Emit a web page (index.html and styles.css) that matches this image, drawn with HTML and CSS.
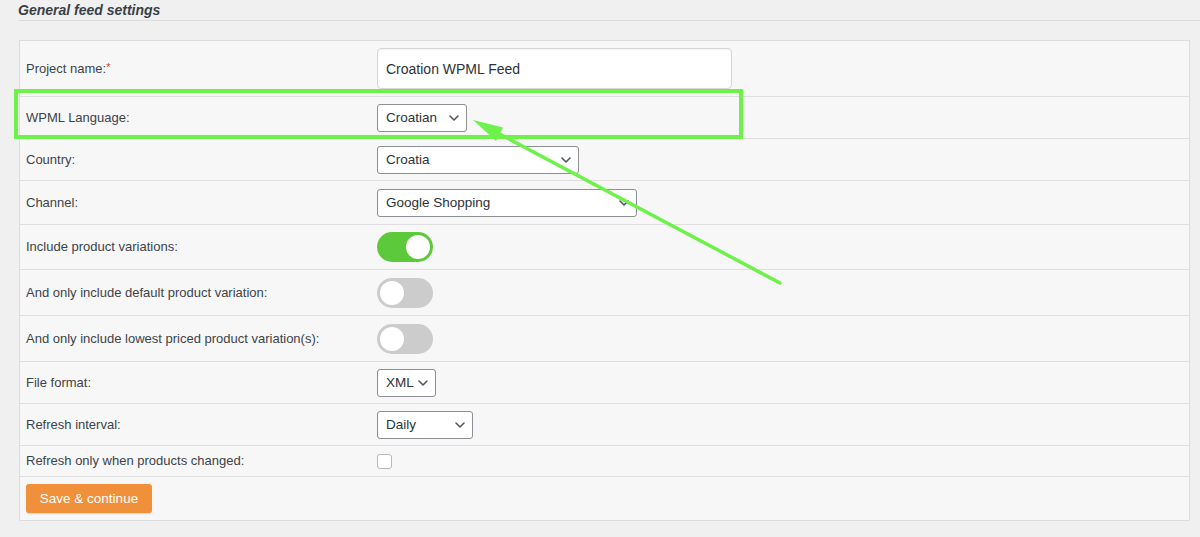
FILE: index.html
```html
<!DOCTYPE html>
<html lang="en">
<head>
<meta charset="utf-8">
<title>General feed settings</title>
<link rel="stylesheet" href="styles.css">
</head>
<body>
<div class="wrap">
  <h2 class="title">General feed settings</h2>
  <div class="panel">
    <div class="row row--text">
      <div class="label">Project name:<span class="req">*</span></div>
      <div class="field"><div class="textinput">Croation WPML Feed</div></div>
    </div>
    <div class="row row--select">
      <div class="label">WPML Language:</div>
      <div class="field"><div class="select select--lang"><span>Croatian</span><svg class="chev" viewBox="0 0 10 6"><path d="M1 1l4 4 4-4"/></svg></div></div>
    </div>
    <div class="row row--select">
      <div class="label">Country:</div>
      <div class="field"><div class="select select--country"><span>Croatia</span><svg class="chev" viewBox="0 0 10 6"><path d="M1 1l4 4 4-4"/></svg></div></div>
    </div>
    <div class="row row--channel">
      <div class="label">Channel:</div>
      <div class="field"><div class="select select--channel"><span>Google Shopping</span><svg class="chev" viewBox="0 0 10 6"><path d="M1 1l4 4 4-4"/></svg></div></div>
    </div>
    <div class="row row--toggle row--tight">
      <div class="label">Include product variations:</div>
      <div class="field"><div class="toggle toggle--on"><span class="knob"></span></div></div>
    </div>
    <div class="row row--toggle">
      <div class="label">And only include default product variation:</div>
      <div class="field"><div class="toggle"><span class="knob"></span></div></div>
    </div>
    <div class="row row--toggle">
      <div class="label">And only include lowest priced product variation(s):</div>
      <div class="field"><div class="toggle"><span class="knob"></span></div></div>
    </div>
    <div class="row row--select">
      <div class="label">File format:</div>
      <div class="field"><div class="select select--format"><span>XML</span><svg class="chev" viewBox="0 0 10 6"><path d="M1 1l4 4 4-4"/></svg></div></div>
    </div>
    <div class="row row--select">
      <div class="label">Refresh interval:</div>
      <div class="field"><div class="select select--interval"><span>Daily</span><svg class="chev" viewBox="0 0 10 6"><path d="M1 1l4 4 4-4"/></svg></div></div>
    </div>
    <div class="row row--check">
      <div class="label">Refresh only when products changed:</div>
      <div class="field"><span class="checkbox"></span></div>
    </div>
    <div class="row row--actions">
      <div class="label"><button class="btn" type="button">Save &amp; continue</button></div>
    </div>
  </div>
</div>
<svg class="annot" viewBox="0 0 1200 537" width="1200" height="537">
  <rect x="16" y="91" width="725" height="46" fill="none" stroke="#6ef24b" stroke-width="4"/>
  <line x1="780" y1="283" x2="492" y2="130" stroke="#6ef24b" stroke-width="3.5" stroke-linecap="round"/>
  <polygon points="473,120 503,127.5 496,141" fill="#6ef24b"/>
</svg>
</body>
</html>
```

FILE: styles.css
```css
* { box-sizing: border-box; }

html, body {
  margin: 0;
  padding: 0;
}

body {
  background: #f0f0f0;
  font-family: "Liberation Sans", Arial, sans-serif;
  font-size: 13px;
  color: #3c434a;
  width: 1200px;
  height: 537px;
  overflow: hidden;
  position: relative;
}

.wrap {
  padding-left: 18px;
}

.title {
  margin: 0;
  padding: 1px 0 1px;
  font-size: 14px;
  line-height: 18px;
  font-weight: bold;
  font-style: italic;
  color: #3a3f44;
  border-bottom: 1px solid #dcdcdc;
}

.panel {
  margin: 19px 10px 0 1px;
  background: #f7f7f7;
  border: 1px solid #dcdcdc;
}

.row {
  display: grid;
  grid-template-columns: 357px 1fr;
  align-items: center;
  border-bottom: 1px solid #dfdfdf;
}

.row:last-child {
  border-bottom: none;
}

.row--text { height: 56px; }
.row--select { height: 42px; }
.row--channel { height: 44px; }
.row--toggle { height: 46px; }
.row--tight { height: 45px; }
.row--check { height: 31px; }
.row--actions { height: 43px; }

.label {
  padding-left: 6px;
  line-height: 16px;
}

.req {
  color: #d63638;
  font-size: 11px;
  vertical-align: top;
  position: relative;
  top: -2px;
}

.field {
  display: flex;
  align-items: center;
}

.textinput {
  width: 355px;
  height: 41px;
  background: #fff;
  border: 1px solid #d6d6d6;
  border-radius: 4px;
  box-shadow: inset 0 1px 2px rgba(0, 0, 0, 0.06);
  padding: 0 8px;
  display: flex;
  align-items: center;
  font-size: 14px;
  color: #2c3338;
}

.select {
  height: 28px;
  background: #fff;
  border: 1px solid #8c8f94;
  border-radius: 3px;
  display: flex;
  align-items: center;
  justify-content: space-between;
  padding: 0 7px 0 8px;
  font-size: 13.5px;
  color: #2c3338;
}

.select--lang { width: 90px; }
.select--country { width: 202px; }
.select--channel { width: 260px; }
.select--format { width: 59px; }
.select--interval { width: 96px; }

.chev {
  width: 10px;
  height: 6px;
  flex: none;
  fill: none;
  stroke: #50575e;
  stroke-width: 1.6;
  stroke-linecap: round;
  stroke-linejoin: round;
}

.toggle {
  width: 56px;
  height: 30px;
  border-radius: 15px;
  background: #cccccc;
  padding: 3px;
  display: flex;
  justify-content: flex-start;
}

.toggle--on {
  background: #5cc93b;
  justify-content: flex-end;
}

.knob {
  width: 24px;
  height: 24px;
  border-radius: 50%;
  background: #fff;
}

.checkbox {
  width: 15px;
  height: 15px;
  background: #fff;
  border: 1px solid #b4b9be;
  border-radius: 3px;
}

.btn {
  font-family: "Liberation Sans", Arial, sans-serif;
  font-size: 13.5px;
  color: #fff;
  background: #f0903a;
  border: none;
  border-radius: 3px;
  height: 29px;
  width: 126px;
  padding: 0;
  box-shadow: 0 1px 1px rgba(0, 0, 0, 0.12);
}

.annot {
  position: absolute;
  left: 0;
  top: 0;
  pointer-events: none;
}
```
